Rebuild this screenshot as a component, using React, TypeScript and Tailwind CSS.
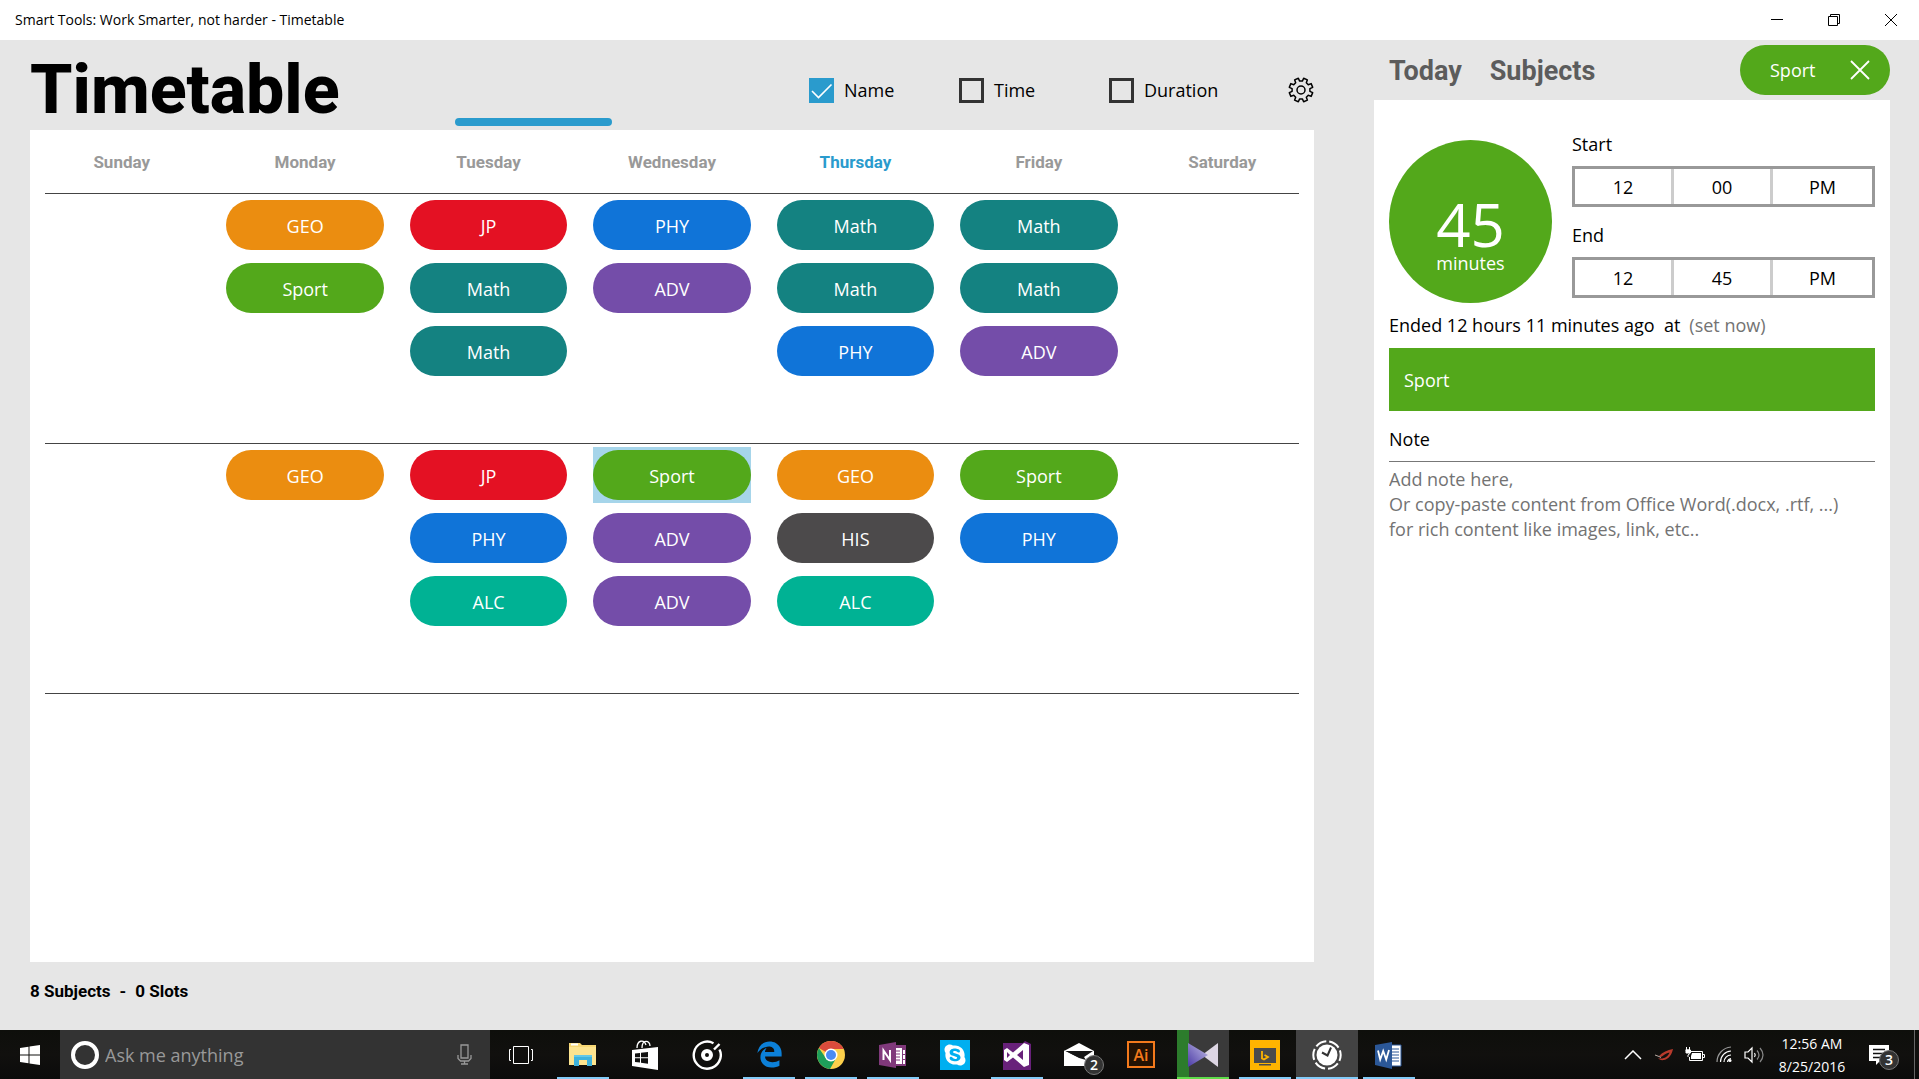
import type { ReactNode } from 'react'
import { FaEdgeLegacy, FaSkype } from 'react-icons/fa'

const colors = {
  GEO: 'bg-[#eb8d10]',
  Sport: 'bg-[#53a81b]',
  JP: 'bg-[#e41123]',
  Math: 'bg-[#148281]',
  PHY: 'bg-[#1074d8]',
  ADV: 'bg-[#744da9]',
  HIS: 'bg-[#4c4a4b]',
  ALC: 'bg-[#00b294]',
}

type Subject = keyof typeof colors

const days = ['Sunday', 'Monday', 'Tuesday', 'Wednesday', 'Thursday', 'Friday', 'Saturday']
const today = 'Thursday'

const weeks: Subject[][][] = [
  [
    [],
    ['GEO', 'Sport'],
    ['JP', 'Math', 'Math'],
    ['PHY', 'ADV'],
    ['Math', 'Math', 'PHY'],
    ['Math', 'Math', 'ADV'],
    [],
  ],
  [
    [],
    ['GEO'],
    ['JP', 'PHY', 'ALC'],
    ['Sport', 'ADV', 'ADV'],
    ['GEO', 'HIS', 'ALC'],
    ['Sport', 'PHY'],
    [],
  ],
]

const selected = { week: 1, day: 3, slot: 0 }

function TitleBar() {
  return (
    <header className="flex h-10 items-center justify-between bg-white pl-[15px]">
      <span className="text-sm">Smart Tools: Work Smarter, not harder - Timetable</span>
      <div className="flex h-full">
        <button aria-label="Minimize" className="flex w-[57px] items-center justify-center">
          <svg width="12" height="12" viewBox="0 0 12 12" stroke="#000" fill="none">
            <path d="M0 5.5h12" />
          </svg>
        </button>
        <button aria-label="Restore" className="flex w-[57px] items-center justify-center">
          <svg width="12" height="12" viewBox="0 0 12 12" stroke="#000" fill="none">
            <path d="M.5 2.5h9v9h-9zM2.5 2.5v-2h9v9h-2" />
          </svg>
        </button>
        <button aria-label="Close" className="flex w-[57px] items-center justify-center">
          <svg width="12" height="12" viewBox="0 0 12 12" stroke="#000" fill="none">
            <path d="M0 0l12 12M12 0L0 12" />
          </svg>
        </button>
      </div>
    </header>
  )
}

function Check({ label, checked }: { label: string; checked?: boolean }) {
  return (
    <label className="flex w-[150px] items-center gap-[10px]">
      <span className="grid size-[25px]">
        <input
          type="checkbox"
          defaultChecked={checked}
          className="peer col-start-1 row-start-1 size-[25px] appearance-none border-[3px] border-[#333] checked:border-[#2a9bcd] checked:bg-[#2a9bcd]"
        />
        <svg
          viewBox="0 0 25 25"
          className="pointer-events-none invisible col-start-1 row-start-1 size-[25px] peer-checked:visible"
          fill="none"
          stroke="#fff"
          strokeWidth="1.6"
        >
          <path d="M3 13l6.500 6.500L22.500 6.500" />
        </svg>
      </span>
      {label}
    </label>
  )
}

function gearPath() {
  const teeth = 8
  const pts: string[] = []
  for (let i = 0; i < teeth; i++) {
    const base = (i * 2 * Math.PI) / teeth
    const corners = [
      [-0.24, 9],
      [-0.17, 12],
      [0.17, 12],
      [0.24, 9],
    ]
    corners.forEach(([a, r]) => {
      const t = base + a + Math.PI / 8
      pts.push(`${(13 + r * Math.cos(t)).toFixed(2)} ${(13 + r * Math.sin(t)).toFixed(2)}`)
    })
  }
  return `M${pts.join('L')}Z`
}

function Timetable() {
  return (
    <main className="flex min-w-0 flex-1 flex-col">
      <div className="flex h-[90px] items-center pt-[10px]">
        <h1 className="w-[425px] font-[Roboto,sans-serif] text-[68px] leading-[68px] font-extrabold">
          Timetable
        </h1>
        <div className="mb-1 h-2 w-[157px] self-end rounded-[4px] bg-[#2a9bcd]" />
        <div className="ml-auto flex items-center">
          <Check label="Name" checked />
          <Check label="Time" />
          <Check label="Duration" />
          <button aria-label="Settings" className="ml-[29px]">
            <svg width="26" height="26" viewBox="0 0 26 26" fill="none" stroke="#000" strokeWidth="1.500" strokeLinejoin="round">
              <path d={gearPath()} />
              <circle cx="13" cy="13" r="4" />
            </svg>
          </button>
        </div>
      </div>

      <section className="flex-1 bg-white">
        <div className="grid h-[63px] grid-cols-7 items-center pt-[2px] text-center font-[Roboto,sans-serif] text-[17px] font-bold text-[#999]">
          {days.map(day => (
            <span key={day} className={day === today ? 'text-[#2a9bcd]' : ''}>
              {day}
            </span>
          ))}
        </div>
        {weeks.map((week, w) => (
          <div key={w} className="h-[250px]">
            <hr className="mx-[15px] border-[#444]" />
            <div className="grid grid-cols-7 pt-[3px]">
              {week.map((slots, d) => (
                <div key={d} className="flex flex-col gap-[7px] px-[13px]">
                  {slots.map((name, s) => {
                    const active = selected.week === w && selected.day === d && selected.slot === s
                    return (
                      <div key={s} className={`py-[3px] ${active ? 'bg-[#a6d5ea]' : ''}`}>
                        <button className={`h-[50px] w-full rounded-full pt-px text-white ${colors[name]}`}>
                          {name}
                        </button>
                      </div>
                    )
                  })}
                </div>
              ))}
            </div>
          </div>
        ))}
        <hr className="mx-[15px] border-[#444]" />
      </section>

      <footer className="flex h-[68px] gap-[9px] pt-4 font-[Roboto,sans-serif] text-[17px] font-bold">
        <span>8 Subjects</span>
        <span>-</span>
        <span>0 Slots</span>
      </footer>
    </main>
  )
}

function TimeField({ label, parts }: { label: string; parts: string[] }) {
  const id = `time-${label}`
  return (
    <div className="flex flex-col gap-[9px]">
      <span id={id} className="leading-[25px]">
        {label}
      </span>
      <button
        aria-labelledby={id}
        className="grid h-[41px] grid-cols-3 divide-x-[3px] divide-[#ccc] border-[3px] border-[#999]"
      >
        {parts.map((part, i) => (
          <span key={i} className="flex h-full items-center justify-center">
            {part}
          </span>
        ))}
      </button>
    </div>
  )
}

function SlotPanel() {
  return (
    <aside className="flex w-[516px] flex-col pb-[30px]">
      <div className="flex h-[60px] items-center pl-[15px]">
        <nav className="flex gap-7 pt-[2px] font-[Roboto,sans-serif] text-[27px] font-bold text-[#5c5c5c]">
          <button>Today</button>
          <button>Subjects</button>
        </nav>
        <button className="ml-auto flex h-[50px] w-[150px] items-center justify-between rounded-full bg-[#53a81b] pr-5 pl-[30px] text-white">
          Sport
          <svg width="20" height="20" viewBox="0 0 20 20" stroke="#fff" strokeWidth="1.800" fill="none">
            <path d="M1 1l18 18M19 1L1 19" />
          </svg>
        </button>
      </div>

      <div className="flex flex-1 flex-col bg-white px-[15px] pt-8">
        <div className="flex gap-5">
          <div className="mt-2 flex size-[163px] shrink-0 flex-col items-center rounded-full bg-[#53a81b] pt-[54px] text-white">
            <span className="text-[60px] leading-[60px]">45</span>
            <span className="leading-[18px]">minutes</span>
          </div>
          <div className="flex flex-1 flex-col gap-4">
            <TimeField label="Start" parts={['12', '00', 'PM']} />
            <TimeField label="End" parts={['12', '45', 'PM']} />
          </div>
        </div>

        <p className="mt-[10px] flex gap-[9px] leading-[25px]">
          <span className="whitespace-pre">Ended 12 hours 11 minutes ago  at</span>
          <button className="text-[#737373]">(set now)</button>
        </p>

        <select
          aria-label="Subject"
          className="mt-[10px] h-[63px] w-full appearance-none bg-[#53a81b] px-[15px] text-white"
        >
          <option>Sport</option>
        </select>

        <label htmlFor="note" className="mt-4 pb-[9px] leading-[25px]">
          Note
        </label>
        <textarea
          id="note"
          className="flex-1 resize-none border-t border-[#777] pt-[5px] leading-[25px] outline-none placeholder:text-[#737373]"
          placeholder={'Add note here,\nOr copy-paste content from Office Word(.docx, .rtf, ...)\nfor rich content like images, link, etc..'}
        />
      </div>
    </aside>
  )
}

function TaskViewIcon() {
  return (
    <svg width="30" height="30" viewBox="0 0 30 30" fill="none" stroke="#fff">
      <path d="M7.500 6.500h15v17h-15zM5 9.500H3.500v11H5M25 9.500h1.500v11H25" />
    </svg>
  )
}

function ExplorerIcon() {
  return (
    <svg width="30" height="30" viewBox="0 0 30 30">
      <path d="M1 3h11l2 2h14v20H1z" fill="#f7d774" />
      <path d="M3 3.500h7v2H3z" fill="#fff" />
      <path d="M1 7h27v18H1z" fill="#fde48f" />
      <path d="M6 26V15h18v11h-5v-6h-8v6z" fill="#3fb3dd" />
      <path d="M6 15h18v2H6z" fill="#63c8e8" />
    </svg>
  )
}

function StoreIcon() {
  return (
    <svg width="30" height="30" viewBox="0 0 30 30">
      <path d="M7 8C7 0 14-1 16 5M12 8c0-9 8-8 8-2" fill="none" stroke="#fff" strokeWidth="1.300" />
      <path d="M2 10l26-3v23L2 26z" fill="#fff" />
      <path d="M5 13.500l5-.6v4.300H5zM11 12.700l7-.8v5.300h-7zM5 18.200h5v4.400l-5-.7zM11 18.200h7v5.500l-7-1z" fill="#111" />
    </svg>
  )
}

function GrooveIcon() {
  return (
    <svg width="30" height="30" viewBox="0 0 30 30" fill="none" stroke="#fff">
      <path d="M21.500 3.200A13.500 13.500 0 1 0 27.500 9.500" strokeWidth="2.400" />
      <circle cx="15" cy="15" r="4" strokeWidth="4" />
      <path d="M22 9.500l5.500-5.500" strokeWidth="2.400" />
    </svg>
  )
}

function ChromeIcon() {
  return (
    <svg width="30" height="30" viewBox="0 0 30 30">
      <circle cx="15" cy="15" r="14" fill="#fdd04b" />
      <path d="M15 15L2.900 8A14 14 0 0 1 27.600 9H15z" fill="#da4b3c" />
      <path d="M2.900 8A14 14 0 0 0 14 29l6.200-11L15 15l-5.200 3z" fill="#1e9f5a" />
      <circle cx="15" cy="15" r="6.500" fill="#fff" />
      <circle cx="15" cy="15" r="5" fill="#4b8bf4" />
    </svg>
  )
}

function OneNoteIcon() {
  return (
    <svg width="30" height="30" viewBox="0 0 30 30">
      <path d="M14 5h14v21H14z" fill="#80397b" />
      <path d="M16 8h8v16h-8z" fill="#fff" />
      <path d="M17 11h5M17 14h5M17 17h5M17 20h5" stroke="#80397b" />
      <path d="M25 10h2v4h-2zM25 15h2v4h-2zM25 20h2v4h-2z" fill="#fff" />
      <path d="M1 5l17-3v26L1 25z" fill="#80397b" />
      <path d="M5.500 20V10.500L12 20v-10" stroke="#fff" strokeWidth="2" fill="none" />
    </svg>
  )
}

function VisualStudioIcon() {
  return (
    <svg width="30" height="30" viewBox="0 0 30 30">
      <path d="M1 3h20l2-2 6 3v26H1z" fill="#68217a" />
      <path
        d="M2 10l3-2 6 4.500L22 3l5 2v20l-5 2-11-9.500L5 22l-3-2zM5 12v6l3-3zM21 10l-6 5 6 5z"
        fill="#fff"
        fillRule="evenodd"
      />
    </svg>
  )
}

// Unread counter that hangs off the lower right of an icon
function Badge({ children }: { children: ReactNode }) {
  return (
    <span className="absolute -right-[10px] -bottom-[5px] flex size-5 items-center justify-center rounded-full border border-[#777] bg-[#333] text-sm font-semibold text-white">
      {children}
    </span>
  )
}

function MailIcon() {
  return (
    <span className="relative">
      <svg width="30" height="30" viewBox="0 0 30 30">
        <path d="M0 11L15 3l15 8v15H0z" fill="#fff" />
        <path d="M1 11h28l-9 6 2 3-7-2z" fill="#151515" />
        <path d="M0 11l17 9" stroke="#fff" strokeWidth="1" />
      </svg>
      <Badge>2</Badge>
    </span>
  )
}

function IllustratorIcon() {
  return (
    <span className="flex h-[27px] w-7 items-center justify-center border-2 border-[#f47a1c] bg-[#241203] text-base font-semibold text-[#f47a1c]">
      Ai
    </span>
  )
}

function KmIcon() {
  return (
    <svg width="32" height="30" viewBox="0 0 32 30">
      <defs>
        <linearGradient id="km" x1="0" y1="1" x2="1" y2="0">
          <stop offset="0" stopColor="#4a3aa5" />
          <stop offset="1" stopColor="#c4bfe8" />
        </linearGradient>
      </defs>
      <path d="M31 3v24L15 15z" fill="#ddd6e4" />
      <path d="M1 3l20 12L1 27z" fill="url(#km)" />
    </svg>
  )
}

function VideoIcon() {
  return (
    <svg width="30" height="30" viewBox="0 0 30 30">
      <path d="M0 0h30v30H0z" fill="#ffb400" />
      <path d="M4 8h22v15H4zM9 24h12v1.500H9z" fill="#4b4b4b" />
      <path d="M12 11v7.500l2 1 4-2.500-3.500-2" fill="none" stroke="#ffb400" strokeWidth="1.800" />
    </svg>
  )
}

function ClockIcon() {
  return (
    <svg width="30" height="30" viewBox="0 0 30 30" fill="none">
      <circle cx="15" cy="15" r="13.700" stroke="#fff" strokeWidth="2" strokeDasharray="11.350 3" strokeDashoffset="-9" />
      <circle cx="15" cy="15" r="10.500" fill="#fff" />
      <path d="M10 12.500l5.500 3L19 7.500" stroke="#333" strokeWidth="2" />
    </svg>
  )
}

function WordIcon() {
  return (
    <svg width="30" height="30" viewBox="0 0 30 30">
      <path d="M15 5h12v21H15z" fill="#fff" stroke="#2b5797" />
      <path d="M18 9h7M18 12h7M18 15h7M18 18h7M18 21h7" stroke="#2b5797" />
      <path d="M1 5l17-3v27L1 25z" fill="#2b5797" />
      <path d="M4 10.500l2.200 9 3-8.500 3 8.500L15 10" stroke="#fff" strokeWidth="1.800" fill="none" />
    </svg>
  )
}

const apps: { name: string; icon: ReactNode; bar?: string; bg?: string }[] = [
  { name: 'Task View', icon: <TaskViewIcon /> },
  { name: 'File Explorer', icon: <ExplorerIcon />, bar: 'inset-x-[5px] bg-[#83cbf8]' },
  { name: 'Store', icon: <StoreIcon /> },
  { name: 'Groove Music', icon: <GrooveIcon /> },
  { name: 'Edge', icon: <FaEdgeLegacy size={27} color="#0c80d8" />, bar: 'inset-x-[5px] bg-[#83cbf8]' },
  { name: 'Chrome', icon: <ChromeIcon />, bar: 'inset-x-[5px] bg-[#83cbf8]' },
  { name: 'OneNote', icon: <OneNoteIcon />, bar: 'inset-x-[5px] bg-[#83cbf8]' },
  {
    name: 'Skype',
    icon: (
      <span className="flex size-[30px] items-center justify-center bg-[#00aff0]">
        <FaSkype size={24} color="#fff" />
      </span>
    ),
  },
  { name: 'Visual Studio', icon: <VisualStudioIcon />, bar: 'inset-x-[5px] bg-[#83cbf8]' },
  { name: 'Mail', icon: <MailIcon /> },
  { name: 'Illustrator', icon: <IllustratorIcon /> },
  {
    name: 'KMPlayer',
    icon: <KmIcon />,
    bar: 'inset-x-[5px] bg-[#5fdc4a]',
    bg: 'inset-x-[5px] border-l-[12px] border-[#2c7c2c] bg-[#3a3a3a]',
  },
  { name: 'Video', icon: <VideoIcon />, bar: 'inset-x-[5px] bg-[#83cbf8]' },
  { name: 'Smart Tools', icon: <ClockIcon />, bar: 'inset-x-0 bg-[#83cbf8]', bg: 'inset-x-0 bg-[#434343]' },
  { name: 'Word', icon: <WordIcon />, bar: 'inset-x-[5px] bg-[#83cbf8]' },
]

function Tray() {
  return (
    <div className="ml-auto flex items-center text-white">
      <button aria-label="Show hidden icons" className="flex w-[31px] justify-center">
        <svg width="18" height="10" viewBox="0 0 18 10" fill="none" stroke="#fff" strokeWidth="1.500">
          <path d="M1 9l8-8 8 8" />
        </svg>
      </button>
      <button aria-label="ROG" className="flex w-[31px] justify-center">
        <svg width="18" height="14" viewBox="0 0 18 14">
          <path d="M4 8C8 4 12 2 18 1c-1 5-4 10-9 11-3 .5-5-.5-6-2 3 1 6 .5 8-1 2-1.500 3-3 3.500-4.500C11 5 8 8 6 9z" fill="#b83a2c" />
          <path d="M0 7l4 1.500 2 1" stroke="#b9aaa4" fill="none" />
        </svg>
      </button>
      <button aria-label="Battery" className="flex w-[31px] justify-center">
        <svg width="20" height="16" viewBox="0 0 20 16" fill="none" stroke="#fff">
          <path d="M6 4.500h11.500v9H4.500V10M17.500 7.500h2v3h-2" />
          <path d="M7 6h9v6H6V9z" fill="#fff" stroke="none" />
          <path d="M1.500 0v3M4.500 0v3M.5 3h5v3l-2.500 2V10" />
          <path d="M1 3h4v3H1z" fill="#fff" />
        </svg>
      </button>
      <button aria-label="Network" className="flex w-[29px] justify-center">
        <svg width="17" height="17" viewBox="0 0 17 17" fill="none" stroke="#fff" strokeWidth="1.200">
          <path d="M1 16A15 15 0 0 1 15 1" stroke="#999" />
          <path d="M4.500 16A11 11 0 0 1 15 5" />
          <path d="M8 16a7 7 0 0 1 7-7M11.500 16a4 4 0 0 1 3.500-3.500" />
          <circle cx="14" cy="14.500" r="1.500" fill="#fff" stroke="none" />
        </svg>
      </button>
      <button aria-label="Volume" className="flex w-[30px] justify-center">
        <svg width="21" height="18" viewBox="0 0 21 18" fill="none" stroke="#fff" strokeWidth="1.200">
          <path d="M1 6h3l4-4v14l-4-4H1z" />
          <path d="M10.500 7q1.500 2 0 4" />
          <path d="M13 4.500q4 4.500 0 9M16 2q6 7 0 14" stroke="#888" />
        </svg>
      </button>
      <div className="flex w-[86px] flex-col text-center text-sm leading-[23px]">
        <span>12:56 AM</span>
        <span>8/25/2016</span>
      </div>
      <button aria-label="Notifications" className="relative ml-[14px]">
        <svg width="20" height="20" viewBox="0 0 20 20">
          <path d="M0 0h20v16h-9l-4 4v-4H0z" fill="#fff" />
          <path d="M4 4.500h12M4 8.500h12M4 12.500h8" stroke="#111" strokeWidth="1.300" />
        </svg>
        <Badge>3</Badge>
      </button>
      <div className="mr-1 ml-[25px] h-[49px] w-px bg-[#666]" />
    </div>
  )
}

function Taskbar() {
  return (
    <footer className="flex h-[49px] bg-linear-to-b from-[#0e0f0b] via-[#11100e] to-[#0b0b0b]">
      <button aria-label="Start menu" className="flex w-[60px] items-center justify-center">
        <svg width="20" height="20" viewBox="0 0 20 20" fill="#fff">
          <path d="M0 3l8.500-1.300v7.800H0zM9.500 1.500L20 0v9.500H9.500zM0 10.500h8.500v7.800L0 17zM9.500 10.500H20V20L9.500 18.500z" />
        </svg>
      </button>
      <div className="flex w-[430px] items-center bg-[#333] pr-[18px] pl-[11px]">
        <span className="size-7 shrink-0 rounded-full border-4 border-white" />
        <input
          aria-label="Search"
          placeholder="Ask me anything"
          className="ml-[6px] h-full min-w-0 flex-1 outline-none placeholder:text-[#999]"
        />
        <svg width="15" height="21" viewBox="0 0 15 21" fill="none" stroke="#999" strokeWidth="1.300">
          <path d="M4 1h7v13H4zM1 11v3.500L3.500 17h8l2.500-2.500V11M7.500 17v3M4 20h7" />
        </svg>
      </div>
      {apps.map(app => (
        <button key={app.name} aria-label={app.name} className="relative flex w-[62px] items-center justify-center">
          {app.bg && <span className={`absolute inset-y-0 ${app.bg}`} />}
          <span className="relative flex">{app.icon}</span>
          {app.bar && <span className={`absolute bottom-0 h-[2px] ${app.bar}`} />}
        </button>
      ))}
      <Tray />
    </footer>
  )
}

export default function App() {
  return (
    <div className="flex min-h-screen flex-col bg-[#e6e6e6] font-['Open_Sans',sans-serif] text-lg text-black">
      <TitleBar />
      <div className="flex flex-1 gap-[60px] pr-[29px] pl-[30px]">
        <Timetable />
        <SlotPanel />
      </div>
      <Taskbar />
    </div>
  )
}
